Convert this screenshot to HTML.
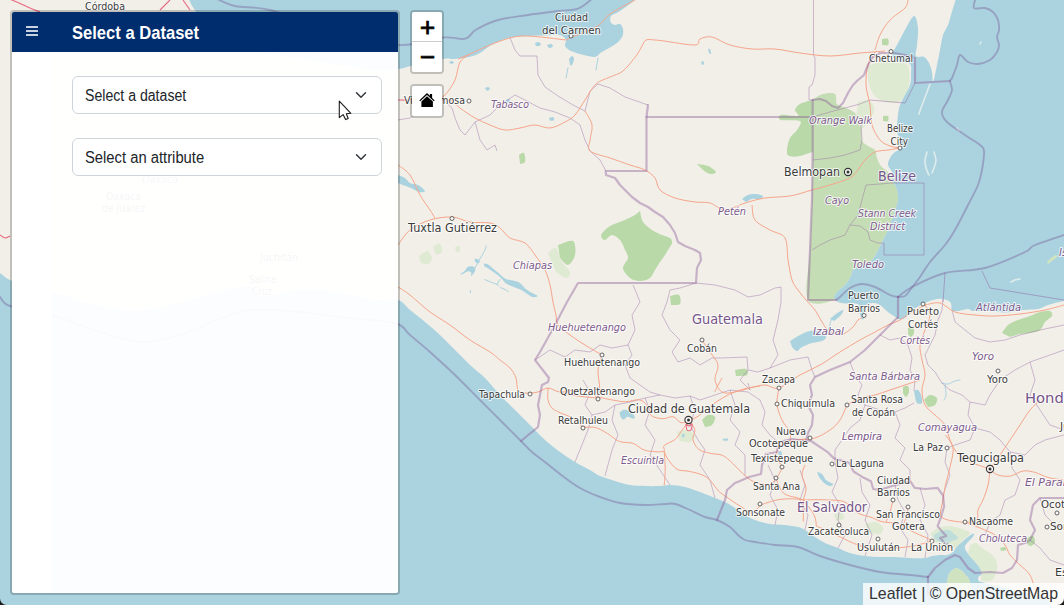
<!DOCTYPE html>
<html lang="en">
<head>
<meta charset="utf-8">
<title>Select a Dataset</title>
<style>
html,body{margin:0;padding:0;width:1064px;height:605px;overflow:hidden;background:#f2efe9;font-family:"Liberation Sans",sans-serif;}
#wrap{position:relative;width:1064px;height:605px;overflow:hidden;}
#map{position:absolute;left:0;top:0;display:block;}
.sidebar{position:absolute;left:10px;top:10px;width:386px;height:581px;border:2px solid rgba(0,0,0,.2);border-radius:4px;background-clip:padding-box;overflow:hidden;}
.tabs{position:absolute;left:0;top:0;width:40px;height:100%;background:#fff;}
.tab{width:40px;height:40px;background:#002d6d;position:relative;}
.tab i{position:absolute;left:14px;width:12px;height:1.6px;background:#c9d2e2;border-radius:.5px;}
.content{position:absolute;left:40px;top:0;right:0;bottom:0;background:rgba(255,255,255,.95);}
.hdr{height:40px;background:#002d6d;color:#fff;margin:0;padding:0 0 0 20px;line-height:40px;font-weight:bold;font-size:19px;white-space:nowrap;}
.hdr span{display:inline-block;transform-origin:0 50%;}
.sel{position:absolute;left:20px;width:308px;height:36px;border:1px solid #ced4da;border-radius:6px;background:#fff;color:#212529;font-size:16px;line-height:38px;}
.sel span{position:absolute;left:11.6px;top:0;white-space:nowrap;transform-origin:0 50%;display:inline-block;}
.sel svg{position:absolute;right:12px;top:12px;}
.bar{position:absolute;left:410px;border:2px solid rgba(0,0,0,.2);border-radius:4px;background-clip:padding-box;width:30px;}
.bar a{display:block;width:30px;background:#fff;color:#000;text-align:center;text-decoration:none;font-family:"Liberation Mono","DejaVu Sans Mono",monospace;font-weight:bold;font-size:26px;position:relative;}
.bar a b{position:absolute;left:0;width:30px;text-align:center;font-weight:normal;-webkit-text-stroke:.8px #000;}
.attr{position:absolute;right:0;bottom:0;height:22px;width:201px;background:rgba(255,255,255,.8);color:#333;font-size:15.9px;line-height:22px;white-space:nowrap;}
.attr span{position:absolute;left:6px;top:0;display:inline-block;transform-origin:0 50%;}
.corner{position:absolute;width:8px;height:8px;}
</style>
</head>
<body>
<div id="wrap">
<svg id="map" width="1064" height="605" viewBox="0 0 1064 605">
<rect width="1064" height="605" fill="#f2efe9"/>
<g fill="#b9d9a8">
<path d="M640 211 C640.5 212.8 641.0 218.8 643 222 C645.0 225.2 648.8 227.8 652 230 C655.2 232.2 659.0 233.7 662 235 C665.0 236.3 668.3 236.7 670 238 C671.7 239.3 672.3 241.0 672 243 C671.7 245.0 669.2 248.0 668 250 C666.8 252.0 666.3 253.0 665 255 C663.7 257.0 661.7 259.5 660 262 C658.3 264.5 656.7 267.3 655 270 C653.3 272.7 652.5 276.2 650 278 C647.5 279.8 643.3 281.0 640 281 C636.7 281.0 632.8 280.2 630 278 C627.2 275.8 623.3 271.3 623 268 C622.7 264.7 627.7 261.0 628 258 C628.3 255.0 626.3 253.0 625 250 C623.7 247.0 622.2 242.5 620 240 C617.8 237.5 614.5 235.0 612 235 C609.5 235.0 606.8 239.8 605 240 C603.2 240.2 601.0 237.7 601 236 C601.0 234.3 603.2 231.8 605 230 C606.8 228.2 608.7 226.7 612 225 C615.3 223.3 621.2 221.7 625 220 C628.8 218.3 633.3 215.8 635 215Z"/>
<path d="M558 245 C560.5 244.3 570.2 239.3 573 241 C575.8 242.7 575.8 251.0 575 255 C574.2 259.0 570.5 264.5 568 265 C565.5 265.5 561.3 259.2 560 258Z"/>
<path d="M697 164 C698.8 164.3 704.8 164.7 708 166 C711.2 167.3 715.7 170.7 716 172 C716.3 173.3 712.2 174.3 710 174 C707.8 173.7 704.2 170.7 703 170Z"/>
<path d="M812 100 C810.0 100.7 802.8 102.3 800 104 C797.2 105.7 795.3 108.0 795 110 C794.7 112.0 800.3 115.2 798 116 C795.7 116.8 783.8 114.3 781 115 C778.2 115.7 777.8 119.0 781 120 C784.2 121.0 797.3 119.3 800 121 C802.7 122.7 798.7 127.2 797 130 C795.3 132.8 791.7 134.7 790 138 C788.3 141.3 787.2 147.0 787 150 C786.8 153.0 786.8 155.0 789 156 C791.2 157.0 796.0 156.7 800 156 C804.0 155.3 808.0 153.0 813 152 C818.0 151.0 825.5 152.0 830 150 C834.5 148.0 837.5 144.2 840 140 C842.5 135.8 845.0 130.0 845 125 C845.0 120.0 842.5 114.2 840 110 C837.5 105.8 832.8 102.7 830 100 C827.2 97.3 824.2 95.0 823 94Z"/>
<path d="M1002 333 C1003.0 331.7 1005.3 327.2 1008 325 C1010.7 322.8 1014.3 321.5 1018 320 C1021.7 318.5 1026.3 317.3 1030 316 C1033.7 314.7 1036.7 312.8 1040 312 C1043.3 311.2 1048.0 310.3 1050 311 C1052.0 311.7 1052.8 314.2 1052 316 C1051.2 317.8 1047.0 319.7 1045 322 C1043.0 324.3 1042.5 328.2 1040 330 C1037.5 331.8 1033.3 332.3 1030 333 C1026.7 333.7 1023.3 333.3 1020 334 C1016.7 334.7 1011.7 336.5 1010 337Z"/>
<path d="M908 328 C908.8 327.8 912.0 326.2 913 327 C914.0 327.8 914.3 331.3 914 333 C913.7 334.7 912.0 336.8 911 337 C910.0 337.2 908.5 334.5 908 334Z"/>
<path d="M903 387 C903.8 386.8 907.0 385.2 908 386 C909.0 386.8 909.3 390.2 909 392 C908.7 393.8 907.0 396.8 906 397 C905.0 397.2 903.5 393.7 903 393Z"/>
<path d="M924 400 C925.0 399.2 927.8 395.3 930 395 C932.2 394.7 936.2 396.3 937 398 C937.8 399.7 936.5 403.5 935 405 C933.5 406.5 929.2 406.7 928 407Z"/>
<path d="M702 420 C703.0 419.2 705.8 415.5 708 415 C710.2 414.5 714.3 415.3 715 417 C715.7 418.7 713.7 423.3 712 425 C710.3 426.7 706.2 426.7 705 427Z"/>
<path d="M735 370 C736.8 369.8 744.0 368.2 746 369 C748.0 369.8 748.7 373.8 747 375 C745.3 376.2 737.8 375.8 736 376Z"/>
<path d="M670 296 C671.5 295.8 677.3 293.7 679 295 C680.7 296.3 681.3 302.3 680 304 C678.7 305.7 672.5 304.8 671 305Z"/>
<path d="M882 39 C883.0 39.0 887.0 38.0 888 39 C889.0 40.0 889.0 44.0 888 45 C887.0 46.0 883.0 45.0 882 45Z"/>
<path d="M883 116 C883.8 116.0 887.2 115.2 888 116 C888.8 116.8 888.8 120.2 888 121 C887.2 121.8 883.8 121.0 883 121Z"/>
<path d="M1027 538 C1028.0 537.7 1031.7 535.3 1033 536 C1034.3 536.7 1035.3 540.3 1035 542 C1034.7 543.7 1032.3 545.7 1031 546 C1029.7 546.3 1027.7 544.3 1027 544Z"/>
<path d="M1000 548 C1000.8 547.8 1004.0 546.7 1005 547 C1006.0 547.3 1006.7 549.3 1006 550 C1005.3 550.7 1001.8 550.8 1001 551Z"/>
<path d="M519 155 C519.8 154.7 523.0 151.8 524 153 C525.0 154.2 525.7 160.2 525 162 C524.3 163.8 520.8 163.7 520 164Z"/>
</g>
<g fill="#c4ddb4">
<path d="M812 100 C813.8 99.0 819.2 95.0 823 94 C826.8 93.0 832.7 92.3 835 94 C837.3 95.7 835.2 101.7 837 104 C838.8 106.3 842.8 106.3 846 108 C849.2 109.7 853.5 111.2 856 114 C858.5 116.8 860.0 120.7 861 125 C862.0 129.3 860.8 136.5 862 140 C863.2 143.5 865.8 144.3 868 146 C870.2 147.7 873.5 148.0 875 150 C876.5 152.0 876.0 155.3 877 158 C878.0 160.7 879.2 163.7 881 166 C882.8 168.3 886.0 170.0 888 172 C890.0 174.0 892.2 176.5 893 178 C893.8 179.5 892.3 179.0 893 181 C893.7 183.0 896.2 186.8 897 190 C897.8 193.2 898.3 196.7 898 200 C897.7 203.3 896.0 206.7 895 210 C894.0 213.3 893.3 216.3 892 220 C890.7 223.7 888.5 228.7 887 232 C885.5 235.3 884.5 237.0 883 240 C881.5 243.0 879.8 246.7 878 250 C876.2 253.3 874.7 257.3 872 260 C869.3 262.7 865.2 264.3 862 266 C858.8 267.7 854.8 268.3 853 270 C851.2 271.7 852.3 273.5 851 276 C849.7 278.5 847.2 282.5 845 285 C842.8 287.5 839.8 289.0 838 291 C836.2 293.0 834.3 295.5 834 297 C833.7 298.5 840.3 299.5 836 300 C831.7 300.5 812.3 308.3 808 300 C803.7 291.7 809.3 266.7 810 250 C810.7 233.3 811.5 216.5 812 200 C812.5 183.5 812.8 159.2 813 151Z"/>
</g>
<g fill="#dfead3">
<path d="M433 246 C434.2 245.7 438.5 243.0 440 244 C441.5 245.0 442.7 250.2 442 252 C441.3 253.8 437.0 254.5 436 255Z"/>
<path d="M419 256 C420.3 255.2 424.8 250.7 427 251 C429.2 251.3 431.8 255.8 432 258 C432.2 260.2 429.8 263.2 428 264 C426.2 264.8 422.2 263.2 421 263Z"/>
<path d="M455 247 C455.7 246.8 458.2 245.3 459 246 C459.8 246.7 460.5 250.0 460 251 C459.5 252.0 456.7 251.8 456 252Z"/>
<path d="M868 66 C870.0 65.3 875.5 62.7 880 62 C884.5 61.3 890.3 61.3 895 62 C899.7 62.7 905.7 62.2 908 66 C910.3 69.8 909.8 79.7 909 85 C908.2 90.3 905.3 95.0 903 98 C900.7 101.0 898.8 102.7 895 103 C891.2 103.3 883.8 101.8 880 100 C876.2 98.2 874.0 95.3 872 92 C870.0 88.7 868.7 82.0 868 80Z"/>
<path d="M858 102 C859.7 101.7 865.3 99.0 868 100 C870.7 101.0 873.7 104.7 874 108 C874.3 111.3 872.0 116.7 870 120 C868.0 123.3 864.3 128.0 862 128 C859.7 128.0 857.0 121.3 856 120Z"/>
<path d="M930 534 C931.3 533.0 934.7 529.3 938 528 C941.3 526.7 946.0 525.8 950 526 C954.0 526.2 958.7 527.8 962 529 C965.3 530.2 970.0 531.0 970 533 C970.0 535.0 964.5 538.5 962 541 C959.5 543.5 957.7 547.2 955 548 C952.3 548.8 949.0 546.8 946 546 C943.0 545.2 938.5 543.5 937 543Z"/>
<path d="M970 545 C971.0 544.7 974.0 542.5 976 543 C978.0 543.5 979.7 546.3 982 548 C984.3 549.7 987.7 551.0 990 553 C992.3 555.0 994.8 557.2 996 560 C997.2 562.8 997.7 566.7 997 570 C996.3 573.3 994.5 578.2 992 580 C989.5 581.8 983.8 581.9 982 581 C980.2 580.1 981.7 576.6 981.4 574.5 C981.1 572.4 981.0 570.6 980 568.6 C979.0 566.6 977.5 565.1 975.5 562.6 C973.5 560.1 969.2 555.2 968 553.7Z"/>
<path d="M865 524 C866.7 523.7 872.0 521.5 875 522 C878.0 522.5 882.2 525.0 883 527 C883.8 529.0 882.5 533.0 880 534 C877.5 535.0 870.0 533.2 868 533Z"/>
<path d="M834 514 C835.3 513.8 840.3 512.2 842 513 C843.7 513.8 845.0 517.7 844 519 C843.0 520.3 837.3 520.7 836 521Z"/>
<path d="M677 432 C678.8 431.7 685.0 429.3 688 430 C691.0 430.7 694.7 434.0 695 436 C695.3 438.0 692.5 441.2 690 442 C687.5 442.8 681.7 441.2 680 441Z"/>
<path d="M548 253 C549.3 252.2 553.7 246.5 556 248 C558.3 249.5 559.7 258.0 562 262 C564.3 266.0 569.3 269.3 570 272 C570.7 274.7 568.3 278.0 566 278 C563.7 278.0 557.7 273.0 556 272Z"/>
</g>
<g fill="#aad3df">
<path d="M189 -6 C189.1 -5.0 188.5 -2.7 189.5 0 C190.5 2.7 190.8 4.7 195 10 C199.2 15.3 205.8 25.3 215 32 C224.2 38.7 237.5 45.8 250 50 C262.5 54.2 276.7 54.8 290 57 C303.3 59.2 316.7 60.8 330 63 C343.3 65.2 358.7 69.0 370 70 C381.3 71.0 391.2 69.7 398 69 C404.8 68.3 403.5 67.7 411 66 C418.5 64.3 435.7 60.2 443 59 C450.3 57.8 450.0 59.5 455 59 C460.0 58.5 468.3 57.3 473 56 C477.7 54.7 479.7 53.0 483 51 C486.3 49.0 488.5 46.2 493 44 C497.5 41.8 504.2 38.8 510 37.5 C515.8 36.2 521.7 36.4 528 36 C534.3 35.6 542.7 35.5 548 35.3 C553.3 35.1 557.0 34.2 560 35 C563.0 35.8 565.2 38.2 566 40 C566.8 41.8 564.2 44.2 565 46 C565.8 47.8 567.8 49.5 571 51 C574.2 52.5 580.0 54.0 584 55 C588.0 56.0 592.2 57.4 595 57 C597.8 56.6 598.5 54.1 601 52.5 C603.5 50.9 607.2 49.2 610 47.5 C612.8 45.8 615.4 44.4 617.5 42.5 C619.6 40.6 621.6 38.2 622.5 36 C623.4 33.8 623.4 31.0 623 29 C622.6 27.0 621.3 24.7 620 24 C618.7 23.3 616.6 25.3 615 25 C613.4 24.7 611.3 23.5 610.6 22 C609.9 20.5 609.9 17.6 611 16 C612.1 14.4 615.2 13.9 617.5 12.5 C619.8 11.1 622.1 9.6 625 7.5 C627.9 5.4 632.5 2.2 635 0 C637.5 -2.2 639.2 -5.0 640 -6Z"/>
<path d="M957 -6 C956.8 -5.0 956.5 -3.5 955.5 0 C954.5 3.5 952.2 10.8 951 15 C949.8 19.2 949.3 21.7 948 25 C946.7 28.3 944.3 30.8 943 35 C941.7 39.2 940.8 45.8 940 50 C939.2 54.2 938.7 56.7 938 60 C937.3 63.3 936.8 66.3 936 70 C935.2 73.7 933.7 81.7 933 82 C932.3 82.3 932.7 75.2 932 72 C931.3 68.8 930.3 65.5 929 63 C927.7 60.5 926.2 58.2 924 57 C921.8 55.8 917.2 58.0 916 56 C914.8 54.0 916.7 49.7 917 45 C917.3 40.3 918.5 32.8 918 28 C917.5 23.2 916.2 15.7 914 16 C911.8 16.3 907.8 25.2 905 30 C902.2 34.8 899.0 41.3 897 45 C895.0 48.7 893.7 50.0 893 52 C892.3 54.0 891.8 55.3 893 57 C894.2 58.7 897.2 60.8 900 62 C902.8 63.2 908.2 61.8 910 64 C911.8 66.2 911.0 71.5 911 75 C911.0 78.5 911.0 81.7 910 85 C909.0 88.3 906.7 91.7 905 95 C903.3 98.3 901.2 101.7 900 105 C898.8 108.3 898.5 110.8 898 115 C897.5 119.2 896.7 125.8 897 130 C897.3 134.2 899.2 137.0 900 140 C900.8 143.0 902.8 146.0 902 148 C901.2 150.0 897.0 150.3 895 152 C893.0 153.7 891.2 155.8 890 158 C888.8 160.2 887.7 162.7 888 165 C888.3 167.3 891.2 169.5 892 172 C892.8 174.5 892.2 177.0 893 180 C893.8 183.0 896.2 186.7 897 190 C897.8 193.3 898.3 196.7 898 200 C897.7 203.3 896.0 206.7 895 210 C894.0 213.3 893.3 216.3 892 220 C890.7 223.7 888.5 228.7 887 232 C885.5 235.3 884.5 237.0 883 240 C881.5 243.0 879.8 246.7 878 250 C876.2 253.3 874.7 257.3 872 260 C869.3 262.7 865.2 264.3 862 266 C858.8 267.7 854.8 268.3 853 270 C851.2 271.7 852.3 273.5 851 276 C849.7 278.5 847.2 282.5 845 285 C842.8 287.5 839.8 289.0 838 291 C836.2 293.0 834.3 295.5 834 297 C833.7 298.5 835.3 299.2 836 300 C836.7 300.8 836.5 301.4 838 302 C839.5 302.6 842.7 303.3 845 303.5 C847.3 303.7 849.7 302.8 852 303 C854.3 303.2 857.7 303.2 859 305 C860.3 306.8 859.5 311.7 860 314 C860.5 316.3 861.3 318.3 862 319 C862.7 319.7 863.5 320.2 864 318 C864.5 315.8 863.5 308.5 865 306 C866.5 303.5 870.5 303.2 873 303 C875.5 302.8 877.5 303.5 880 305 C882.5 306.5 885.2 309.8 888 312 C890.8 314.2 894.8 316.8 897 318 C899.2 319.2 899.6 319.6 901 319.5 C902.4 319.4 903.5 319.1 905.5 317.5 C907.5 315.9 910.1 312.2 913 310 C915.9 307.8 919.7 305.7 923 304 C926.3 302.3 929.7 300.8 933 300 C936.3 299.2 940.1 298.6 943 299 C945.9 299.4 949.0 300.7 950.5 302.5 C952.0 304.3 950.8 308.6 952 310 C953.2 311.4 955.3 311.2 958 311 C960.7 310.8 965.5 309.0 968 309 C970.5 309.0 969.7 310.7 973 311 C976.3 311.3 982.6 310.8 988 311 C993.4 311.2 999.7 312.7 1005.5 312.5 C1011.3 312.3 1017.6 310.6 1023 310 C1028.4 309.4 1033.8 309.8 1038 309 C1042.2 308.2 1043.7 306.3 1048 305 C1052.3 303.7 1060.0 301.8 1064 301 C1068.0 300.2 1070.7 351.2 1072 300 C1073.3 248.8 1072.0 45.0 1072 -6Z"/>
<path d="M-6 271 C-5.0 271.3 -2.7 271.5 0 273 C2.7 274.5 5.0 277.7 10 280 C15.0 282.3 23.0 285.0 30 287 C37.0 289.0 42.8 289.5 52 292 C61.2 294.5 74.0 299.2 85 302 C96.0 304.8 107.0 307.8 118 309 C129.0 310.2 140.0 310.2 151 309 C162.0 307.8 173.0 304.8 184 302 C195.0 299.2 206.0 294.7 217 292 C228.0 289.3 242.5 285.3 250 286 C257.5 286.7 255.3 295.2 262 296 C268.7 296.8 280.3 292.0 290 291 C299.7 290.0 310.2 289.3 320 290 C329.8 290.7 339.8 293.3 349 295 C358.2 296.7 366.8 299.2 375 300 C383.2 300.8 392.2 298.3 398 300 C403.8 301.7 405.5 306.3 410 310 C414.5 313.7 420.0 317.8 425 322 C430.0 326.2 435.0 330.3 440 335 C445.0 339.7 450.0 345.0 455 350 C460.0 355.0 465.0 360.3 470 365 C475.0 369.7 480.0 373.0 485 378 C490.0 383.0 495.0 389.7 500 395 C505.0 400.3 510.0 405.0 515 410 C520.0 415.0 525.0 420.0 530 425 C535.0 430.0 540.0 435.5 545 440 C550.0 444.5 555.0 448.3 560 452 C565.0 455.7 570.0 459.0 575 462 C580.0 465.0 585.8 467.7 590 470 C594.2 472.3 595.8 474.2 600 476 C604.2 477.8 610.0 479.5 615 481 C620.0 482.5 625.0 484.2 630 485 C635.0 485.8 640.0 485.8 645 486 C650.0 486.2 655.8 486.2 660 486 C664.2 485.8 665.8 484.8 670 485 C674.2 485.2 680.0 485.8 685 487 C690.0 488.2 695.0 490.2 700 492 C705.0 493.8 710.5 496.2 715 498 C719.5 499.8 723.7 501.3 727 503 C730.3 504.7 732.0 506.0 735 508 C738.0 510.0 741.7 513.0 745 515 C748.3 517.0 750.8 518.5 755 520 C759.2 521.5 765.0 523.2 770 524 C775.0 524.8 780.3 524.5 785 525 C789.7 525.5 794.7 526.2 798 527 C801.3 527.8 802.2 528.3 805 530 C807.8 531.7 811.7 534.8 815 537 C818.3 539.2 821.2 541.2 825 543 C828.8 544.8 833.8 546.3 838 548 C842.2 549.7 845.5 551.7 850 553 C854.5 554.3 860.0 555.3 865 556 C870.0 556.7 875.0 556.8 880 557 C885.0 557.2 890.0 556.8 895 557 C900.0 557.2 905.0 557.8 910 558 C915.0 558.2 921.3 558.3 925 558 C928.7 557.7 929.5 556.5 932 556 C934.5 555.5 937.5 555.2 940 555 C942.5 554.8 944.8 555.5 947 555 C949.2 554.5 951.5 553.2 953 552 C954.5 550.8 954.7 549.2 956 547.7 C957.3 546.2 958.4 545.3 960.6 543.3 C962.9 541.3 967.3 537.4 969.5 535.8 C971.7 534.2 973.5 533.4 974 533.6 C974.5 533.9 974.0 535.2 972.5 537.3 C971.0 539.4 965.8 543.6 965 546.3 C964.2 549.0 966.2 551.0 968 553.7 C969.8 556.4 973.5 560.1 975.5 562.6 C977.5 565.1 979.0 566.6 980 568.6 C981.0 570.6 981.7 572.6 981.4 574.5 C981.1 576.4 978.6 573.8 978 580 C977.4 586.2 1142.0 606.7 978 612 C814.0 617.3 158.0 612.0 -6 612Z"/>
<path d="M790 341 C791.7 340.0 796.7 336.7 800 335 C803.3 333.3 806.7 331.5 810 331 C813.3 330.5 817.3 331.0 820 332 C822.7 333.0 825.7 335.5 826 337 C826.3 338.5 824.3 340.0 822 341 C819.7 342.0 815.3 342.0 812 343 C808.7 344.0 804.5 345.7 802 347 C799.5 348.3 798.7 351.0 797 351 C795.3 351.0 792.8 347.7 792 347Z"/>
<path d="M830 319 C831.0 318.2 833.8 315.5 836 314 C838.2 312.5 842.2 309.8 843 310 C843.8 310.2 842.5 313.2 841 315 C839.5 316.8 835.2 320.0 834 321Z"/>
<path d="M483.7 263.8 C484.4 263.9 486.2 263.6 487.7 264.3 C489.2 265.1 491.0 267.0 492.7 268.3 C494.4 269.6 496.0 270.9 497.6 272.3 C499.2 273.7 501.1 275.6 502.6 276.7 C504.1 277.8 505.0 278.6 506.5 279.2 C508.0 279.8 509.7 279.8 511.5 280.2 C513.3 280.6 515.9 281.0 517.5 281.7 C519.1 282.4 520.1 283.0 521.4 284.2 C522.7 285.4 523.8 287.3 525.4 288.7 C527.0 290.1 529.5 291.5 531.3 292.6 C533.1 293.7 535.3 294.4 536.3 295.1 C537.3 295.8 538.0 296.3 537.3 296.6 C536.6 296.9 533.9 297.5 532.3 297.1 C530.6 296.7 529.2 295.3 527.4 294.1 C525.6 292.9 523.4 291.2 521.4 290.1 C519.4 289.0 517.5 288.5 515.5 287.7 C513.5 286.9 511.1 285.9 509.5 285.2 C507.9 284.4 506.8 284.1 505.6 283.2 C504.5 282.3 503.8 280.9 502.6 279.7 C501.4 278.5 500.1 277.0 498.6 275.8 C497.1 274.6 495.4 273.5 493.7 272.3 C492.0 271.1 490.3 269.8 488.7 268.8 C487.1 267.8 484.9 266.7 484.2 266.3Z"/>
<path d="M459.9 274.3 C460.7 273.7 463.6 272.1 464.9 270.8 C466.2 269.6 466.6 267.6 467.9 266.8 C469.2 266.1 471.6 266.0 472.8 266.3 C474.0 266.6 475.0 267.9 475.3 268.8 C475.6 269.7 475.3 270.8 474.8 271.8 C474.3 272.8 473.0 274.1 472.3 274.8 C471.6 275.5 471.0 276.5 470.8 276.2 C470.6 275.9 471.7 273.6 471.3 272.8 C470.9 272.0 469.5 271.3 468.4 271.3 C467.3 271.3 466.0 272.2 464.9 272.8 C463.8 273.4 462.4 274.3 461.9 274.6Z"/>
<path d="M474.3 259.4 C474.8 259.3 476.4 258.6 477.3 258.9 C478.2 259.2 479.7 260.6 479.8 261.4 C479.9 262.1 478.6 263.3 477.8 263.4 C477.1 263.5 475.7 262.1 475.3 261.9Z"/>
<path d="M398 175 C399.2 175.5 403.0 176.7 405 178 C407.0 179.3 407.8 181.8 410 183 C412.2 184.2 415.5 183.7 418 185 C420.5 186.3 424.8 189.8 425 191 C425.2 192.2 421.3 192.5 419 192 C416.7 191.5 413.7 189.2 411 188 C408.3 186.8 405.2 185.8 403 185 C400.8 184.2 398.8 183.3 398 183Z"/>
<path d="M742 199 C743.0 198.3 745.7 195.8 748 195 C750.3 194.2 753.5 193.8 756 194 C758.5 194.2 762.3 195.2 763 196 C763.7 196.8 761.8 198.5 760 199 C758.2 199.5 754.3 198.5 752 199 C749.7 199.5 747.0 201.5 746 202Z"/>
<path d="M619.5 412.7 C620.2 412.2 622.0 410.1 623.5 409.8 C625.0 409.5 626.7 409.8 628.5 410.8 C630.3 411.8 633.6 414.4 634.4 415.7 C635.2 417.0 634.5 418.5 633.4 418.7 C632.2 418.9 629.1 416.5 627.5 416.7 C625.9 416.9 624.7 419.7 623.5 419.7 C622.3 419.7 621.0 417.2 620.5 416.7Z"/>
<path d="M722.7 438.7 C723.5 438.7 726.9 438.2 727.7 438.5 C728.5 438.8 728.3 440.4 727.5 440.7 C726.7 441.0 723.8 440.5 723 440.5Z"/>
<path d="M682 434 C682.4 434.1 684.2 433.9 684.5 434.5 C684.8 435.1 684.4 437.1 684 437.5 C683.6 437.9 682.3 437.1 682 437Z"/>
<path d="M535 43 C535.5 42.8 537.0 41.8 538 42 C539.0 42.2 540.8 43.3 541 44 C541.2 44.7 539.8 45.7 539 46 C538.2 46.3 536.5 46.0 536 46Z"/>
<path d="M547 45 C547.7 44.8 550.0 43.8 551 44 C552.0 44.2 553.2 45.3 553 46 C552.8 46.7 550.8 47.8 550 48 C549.2 48.2 548.3 47.2 548 47Z"/>
<path d="M569 59 C569.5 58.5 571.2 56.0 572 56 C572.8 56.0 574.0 57.5 574 59 C574.0 60.5 572.7 64.0 572 65 C571.3 66.0 570.3 65.0 570 65Z"/>
<path d="M914 391 C914.7 390.8 916.8 389.3 918 390 C919.2 390.7 920.3 392.8 921 395 C921.7 397.2 922.7 401.7 922 403 C921.3 404.3 918.2 404.0 917 403 C915.8 402.0 915.3 398.0 915 397Z"/>
<path d="M817 472 C817.8 472.3 820.5 472.7 822 474 C823.5 475.3 824.2 478.3 826 480 C827.8 481.7 832.3 483.0 833 484 C833.7 485.0 831.5 486.2 830 486 C828.5 485.8 825.8 484.5 824 483 C822.2 481.5 819.8 478.0 819 477Z"/>
<path d="M778 452 C778.5 451.8 780.3 450.5 781 451 C781.7 451.5 782.3 454.2 782 455 C781.7 455.8 779.5 455.8 779 456Z"/>
<path d="M449 62 C449.5 61.8 451.2 60.8 452 61 C452.8 61.2 454.2 62.5 454 63 C453.8 63.5 451.5 63.8 451 64Z"/>
<path d="M485 88 C485.5 87.8 487.2 86.8 488 87 C488.8 87.2 490.2 88.3 490 89 C489.8 89.7 487.5 90.7 487 91Z"/>
<path d="M506 100 C506.5 99.8 508.3 98.7 509 99 C509.7 99.3 510.3 101.3 510 102 C509.7 102.7 507.5 102.8 507 103Z"/>
<path d="M549 118 C549.7 117.8 552.2 116.7 553 117 C553.8 117.3 554.5 119.3 554 120 C553.5 120.7 550.7 120.8 550 121Z"/>
<path d="M701 62 C701.3 61.8 702.5 60.7 703 61 C703.5 61.3 704.2 63.3 704 64 C703.8 64.7 702.3 64.8 702 65Z"/>
<path d="M708 49 C708.3 49.0 709.5 48.2 710 49 C710.5 49.8 711.2 53.3 711 54 C710.8 54.7 709.3 53.2 709 53Z"/>
</g>
<g fill="#aad3df" fill-opacity=".6">
<path d="M933 535.8 C934.1 535.1 937.2 532.4 939.8 531.4 C942.4 530.4 946.2 529.4 948.7 529.9 C951.2 530.4 953.1 532.9 954.6 534.3 C956.1 535.6 958.5 536.8 958 538 C957.5 539.2 953.8 540.4 951.7 541.3 C949.7 542.2 947.7 543.2 945.7 543.3 C943.7 543.4 941.5 542.4 939.8 541.8 C938.1 541.2 936.0 540.0 935.3 539.6Z"/>
</g>
<g fill="#f2efe9">
<path d="M946 592 C946.2 590.3 946.8 584.9 947.2 582 C947.7 579.1 947.5 576.7 948.7 574.5 C949.9 572.3 952.6 569.4 954.6 568.6 C956.6 567.9 958.6 568.8 960.6 570 C962.6 571.2 965.0 574.2 966.5 576 C968.0 577.8 968.6 577.8 969.5 580.5 C970.4 583.2 971.6 590.1 972 592Z"/>
</g>
<g fill="#cfe3c0">
<path d="M946 592 C946.2 590.3 946.8 584.9 947.2 582 C947.7 579.1 947.5 576.7 948.7 574.5 C949.9 572.3 952.6 569.4 954.6 568.6 C956.6 567.9 958.6 568.8 960.6 570 C962.6 571.2 965.0 574.2 966.5 576 C968.0 577.8 968.6 577.8 969.5 580.5 C970.4 583.2 971.6 590.1 972 592Z"/>
<path d="M1047 262 C1047.7 261.3 1049.5 259.2 1051 258 C1052.5 256.8 1055.0 255.2 1056 255 C1057.0 254.8 1057.7 256.0 1057 257 C1056.3 258.0 1053.5 259.8 1052 261 C1050.5 262.2 1048.7 263.5 1048 264Z"/>
</g>
<g fill="none" stroke="#e9f0ef" stroke-width="1.6" stroke-linecap="round" stroke-opacity=".85">
<path d="M930 84 C929.5 85.3 928.0 89.3 927 92 C926.0 94.7 925.0 97.3 924 100 C923.0 102.7 921.8 105.7 921 108 C920.2 110.3 919.3 113.0 919 114"/>
<path d="M927 152 C926.7 153.3 925.2 157.3 925 160 C924.8 162.7 925.3 165.5 926 168 C926.7 170.5 928.5 173.8 929 175"/>
<path d="M934 152 C934.3 153.3 936.0 157.3 936 160 C936.0 162.7 934.7 165.8 934 168 C933.3 170.2 932.3 172.2 932 173"/>
<path d="M1011 282 C1011.7 281.7 1013.5 280.5 1015 280 C1016.5 279.5 1019.2 279.2 1020 279"/>
<path d="M957 128 L959 131"/>
<path d="M980 44 L981 42"/>
</g>
<g fill="none" stroke="#aad3df" stroke-width="1" stroke-linecap="round">
<path d="M826 336 C826.5 334.7 828.2 330.7 829 328 C829.8 325.3 830.7 321.3 831 320"/>
<path d="M942 383 C943.0 383.2 945.8 384.3 948 384 C950.2 383.7 953.0 381.7 955 381 C957.0 380.3 959.2 380.2 960 380"/>
<path d="M945 385 C945.2 386.7 946.2 392.5 946 395 C945.8 397.5 944.3 399.2 944 400"/>
<path d="M568 68 L566 78"/>
<path d="M598 58 L596 70"/>
<path d="M484.7 279.5 C485.9 280.0 489.9 281.7 492 282.5 C494.1 283.3 495.8 283.9 497 284.5 C498.2 285.1 498.7 285.8 499 286"/>
<path d="M500 279.5 L497 284"/>
<path d="M500.6 287.7 C501.2 287.9 502.7 288.4 504 289 C505.3 289.6 507.8 291.2 508.5 291.6"/>
<path d="M478 262 C478.5 261.2 479.8 259.0 481 257 C482.2 255.0 484.2 251.8 485 250 C485.8 248.2 485.8 246.7 486 246"/>
<path d="M474 270 C474.3 269.3 475.3 267.2 476 266 C476.7 264.8 477.7 263.5 478 263"/>
<path d="M470.3 290.5 L470.6 292.8"/>
</g>
<g fill="none" stroke="#9a6fa6" stroke-opacity=".45" stroke-width="1" stroke-linejoin="round">
<path d="M510 37.5 L515 50 L520 56 L537 56 L538 75 L545 87 L558 96 L573 105 L585 111 L590 91 L598 84 L610 88 L625 97 L648 105"/>
<path d="M443 100 L452 108 L455 118 L460 130 L465 135 L475 122 L490 115 L500 105 L515 95 L525 100 L540 108 L555 112 L570 118 L580 125 L585 140 L590 151 L600 160 L606 171"/>
<path d="M398 120 L410 118 L425 108 L443 100"/>
<path d="M475 122 L480 140 L487 150 L495 145 L497 151"/>
<path d="M813.5 -3 L813.5 55 L815 58 L815 75 L812 85 L809 87 L809 100 L812.7 100"/>
<path d="M696 283 L715 285 L735 290 L748 297 L760 295 L775 288 L781 287 L781 302 L778 320 L773 340 L778 355 L770 368"/>
<path d="M633 285 L636 292 L640 302 L632 315 L635 330 L628 345"/>
<path d="M667 302 L670 290 L680 288 L696 283"/>
<path d="M667 302 L662 315 L670 330 L680 340 L672 352 L678 362 L690 358 L700 365 L712 358 L722 358 L747 357 L748 370 L740 380 L750 390 L748 383"/>
<path d="M535 360 L550 350 L565 357 L575 350 L590 352 L600 345 L612 348 L628 345 L632 355 L625 365 L630 378 L640 385 L650 392 L660 395"/>
<path d="M770 368 L790 360 L808 357 L812 370 L815 377"/>
<path d="M748 370 L758 372 L770 368"/>
<path d="M660 395 L675 398 L690 396 L700 400 L715 395 L730 390 L748 392 L760 400 L765 412 L762 425 L770 435 L780 444"/>
<path d="M583 380 L590 392 L585 405 L592 415 L588 430 L575 462"/>
<path d="M592 415 L605 412 L615 405 L630 402 L645 398 L660 395"/>
<path d="M615 405 L612 420 L618 435 L612 450 L605 476"/>
<path d="M645 398 L650 410 L645 425 L655 440 L650 455 L660 470 L670 485"/>
<path d="M690 396 L695 410 L690 425 L698 440 L705 450 L700 465 L710 480 L715 498"/>
<path d="M730 390 L735 405 L730 420 L740 432 L735 445 L745 455 L745 476"/>
<path d="M812.7 117 L830 112 L845 108 L860 104 L870 100"/>
<path d="M812.7 160 L830 158 L845 155 L860 150 L862 140 L861 125"/>
<path d="M866 185 L862 200 L858 215 L850 225 L845 235 L830 240 L820 245 L812 250"/>
<path d="M866 185 L880 184 L891 183"/>
<path d="M850 225 L860 226 L868 232 L870 240 L878 243 L884 243"/>
<path d="M943 299 L942 310 L938 320 L935 335 L930 345 L925 355 L928 365 L935 372 L942 383"/>
<path d="M952 310 L955 322 L965 330 L975 338 L990 342 L1005 340 L1020 335 L1040 330 L1064 325"/>
<path d="M880 335 L890 340 L900 338 L908 345 L912 358 L910 370 L915 380 L914 391"/>
<path d="M850 362 L855 375 L862 385 L858 395 L865 405 L880 410 L895 412 L905 408 L914 403"/>
<path d="M865 405 L860 420 L850 428 L842 440 L835 450 L835 462"/>
<path d="M895 412 L900 425 L895 438 L905 448 L900 460 L910 470 L910 483"/>
<path d="M942 383 L950 390 L962 395 L970 402 L985 405 L990 395 L1000 380 L1015 370 L1030 362 L1050 355 L1064 350"/>
<path d="M970 402 L968 415 L975 428 L970 440 L955 445 L947 448"/>
<path d="M975 428 L990 432 L1000 440 L1010 452 L1025 455 L1035 445 L1045 440 L1064 435"/>
<path d="M1010 452 L1012 468 L1020 480 L1015 495 L1005 500 L1000 515 L990 522 L985 535"/>
<path d="M947 448 L945 462 L950 475 L943 495"/>
<path d="M1030 362 L1035 380 L1030 395 L1040 410 L1050 425 L1064 430"/>
<path d="M768 465 L775 480 L770 495 L778 510 L775 525"/>
<path d="M800 470 L805 485 L800 500 L808 515 L805 530"/>
<path d="M835 462 L838 478 L832 492 L840 505 L838 520 L845 535 L838 548"/>
<path d="M860 478 L862 492 L870 505 L865 520 L872 535 L865 556"/>
<path d="M895 485 L898 500 L905 512 L900 528 L908 540 L905 557"/>
<path d="M920 488 L925 505 L920 520 L928 535 L925 558"/>
<path d="M1040 498 L1045 515 L1055 525 L1064 528"/>
<path d="M1030 540 L1040 548 L1050 560 L1064 565"/>
</g>
<g fill="none" stroke="#f6a58a" stroke-width="1" stroke-linejoin="round">
<path d="M566 40 C566.8 39.6 565.8 39.8 571 37.5 C576.2 35.2 591.0 29.9 597.5 26 C604.0 22.1 603.8 18.3 610 14 C616.2 9.7 630.8 2.3 635 0"/>
<path d="M458 59 C460.0 58.2 464.7 56.3 470 54 C475.3 51.7 483.3 47.7 490 45 C496.7 42.3 503.7 39.5 510 38 C516.3 36.5 518.7 35.7 528 36 C537.3 36.3 559.7 39.3 566 40"/>
<path d="M435 100 C436.7 99.2 441.7 98.3 445 95 C448.3 91.7 452.5 85.5 455 80 C457.5 74.5 457.5 66.3 460 62 C462.5 57.7 468.3 55.3 470 54"/>
<path d="M435 100 C437.5 100.0 445.8 98.7 450 100 C454.2 101.3 455.8 105.0 460 108 C464.2 111.0 470.0 115.2 475 118 C480.0 120.8 485.0 123.0 490 125 C495.0 127.0 500.0 129.5 505 130 C510.0 130.5 515.0 128.8 520 128 C525.0 127.2 530.0 125.0 535 125 C540.0 125.0 545.0 128.5 550 128 C555.0 127.5 560.8 124.2 565 122 C569.2 119.8 571.7 118.7 575 115 C578.3 111.3 581.5 105.2 585 100 C588.5 94.8 591.8 87.8 596 84 C600.2 80.2 605.5 79.2 610 77 C614.5 74.8 618.7 74.5 623 71 C627.3 67.5 632.8 60.2 636 56 C639.2 51.8 640.3 48.7 642 46 C643.7 43.3 643.8 41.0 646 40 C648.2 39.0 652.0 39.8 655 40 C658.0 40.2 662.5 40.8 664 41"/>
<path d="M664 41 C669.2 41.7 689.0 45.3 695 45 C701.0 44.7 697.2 40.3 700 39 C702.8 37.7 707.0 36.0 712 37 C717.0 38.0 723.3 43.0 730 45 C736.7 47.0 744.5 48.3 752 49 C759.5 49.7 767.0 48.3 775 49 C783.0 49.7 790.8 51.8 800 53 C809.2 54.2 820.0 56.0 830 56 C840.0 56.0 850.8 53.8 860 53 C869.2 52.2 880.8 51.3 885 51"/>
<path d="M875 50 C875.8 47.5 877.5 40.0 880 35 C882.5 30.0 885.8 24.5 890 20 C894.2 15.5 902.0 11.3 905 8 C908.0 4.7 907.5 1.3 908 0"/>
<path d="M875 52 C873.8 54.2 869.5 59.5 868 65 C866.5 70.5 865.7 78.3 866 85 C866.3 91.7 869.0 98.3 870 105 C871.0 111.7 870.3 119.2 872 125 C873.7 130.8 877.0 136.5 880 140 C883.0 143.5 886.7 144.7 890 146 C893.3 147.3 898.3 147.7 900 148"/>
<path d="M585 111 C586.2 113.3 591.2 120.2 592 125 C592.8 129.8 590.3 135.7 590 140 C589.7 144.3 586.7 148.0 590 151 C593.3 154.0 603.3 155.7 610 158 C616.7 160.3 624.2 163.0 630 165 C635.8 167.0 640.8 167.8 645 170 C649.2 172.2 652.5 174.7 655 178 C657.5 181.3 656.7 186.7 660 190 C663.3 193.3 669.2 196.0 675 198 C680.8 200.0 689.2 201.2 695 202 C700.8 202.8 705.0 201.7 710 203 C715.0 204.3 719.2 210.0 725 210 C730.8 210.0 738.3 205.0 745 203 C751.7 201.0 757.5 199.2 765 198 C772.5 196.8 782.2 197.3 790 196 C797.8 194.7 805.3 191.8 812 190 C818.7 188.2 823.7 187.0 830 185 C836.3 183.0 845.3 180.5 850 178 C854.7 175.5 856.7 171.3 858 170"/>
<path d="M752 205 C752.5 207.5 752.0 215.8 755 220 C758.0 224.2 765.0 227.0 770 230 C775.0 233.0 782.0 233.0 785 238 C788.0 243.0 786.8 253.0 788 260 C789.2 267.0 790.3 275.0 792 280 C793.7 285.0 795.7 286.7 798 290 C800.3 293.3 803.2 296.7 806 300 C808.8 303.3 812.3 306.3 815 310 C817.7 313.7 819.8 318.7 822 322 C824.2 325.3 825.0 327.8 828 330 C831.0 332.2 836.0 335.3 840 335 C844.0 334.7 849.0 330.5 852 328 C855.0 325.5 856.3 321.7 858 320 C859.7 318.3 861.3 318.3 862 318"/>
<path d="M858 170 C859.2 168.3 862.2 163.0 865 160 C867.8 157.0 871.2 153.7 875 152 C878.8 150.3 883.8 150.7 888 150 C892.2 149.3 898.0 148.3 900 148"/>
<path d="M398 245 C400.0 242.5 404.7 234.2 410 230 C415.3 225.8 423.0 222.2 430 220 C437.0 217.8 445.3 216.7 452 217 C458.7 217.3 463.7 221.0 470 222 C476.3 223.0 485.0 222.0 490 223 C495.0 224.0 496.7 225.5 500 228 C503.3 230.5 505.8 235.5 510 238 C514.2 240.5 520.8 240.2 525 243 C529.2 245.8 531.7 250.5 535 255 C538.3 259.5 542.5 265.0 545 270 C547.5 275.0 548.7 279.7 550 285 C551.3 290.3 552.0 297.0 553 302 C554.0 307.0 555.2 311.2 556 315 C556.8 318.8 555.7 321.7 558 325 C560.3 328.3 565.5 331.7 570 335 C574.5 338.3 579.7 341.7 585 345 C590.3 348.3 599.2 353.3 602 355"/>
<path d="M398 165 C400.0 166.7 406.3 170.0 410 175 C413.7 180.0 416.7 189.2 420 195 C423.3 200.8 427.5 206.2 430 210 C432.5 213.8 434.2 216.7 435 218"/>
<path d="M398 287 C400.0 288.3 404.7 290.8 410 295 C415.3 299.2 423.3 307.0 430 312 C436.7 317.0 443.3 320.3 450 325 C456.7 329.7 463.3 335.5 470 340 C476.7 344.5 485.0 348.7 490 352 C495.0 355.3 496.7 357.3 500 360 C503.3 362.7 507.3 365.0 510 368 C512.7 371.0 514.7 374.3 516 378 C517.3 381.7 516.5 387.5 518 390 C519.5 392.5 521.7 392.7 525 393 C528.3 393.3 534.2 392.8 538 392 C541.8 391.2 544.3 388.0 548 388 C551.7 388.0 555.5 391.7 560 392 C564.5 392.3 570.0 390.0 575 390 C580.0 390.0 586.2 390.5 590 392 C593.8 393.5 596.7 397.8 598 399"/>
<path d="M702 340 C703.3 342.0 707.3 347.8 710 352 C712.7 356.2 717.2 360.3 718 365 C718.8 369.7 714.3 375.5 715 380 C715.7 384.5 718.7 390.0 722 392 C725.3 394.0 730.3 392.7 735 392 C739.7 391.3 745.0 389.2 750 388 C755.0 386.8 760.2 385.0 765 385 C769.8 385.0 773.2 389.7 779 388 C784.8 386.3 793.2 378.8 800 375 C806.8 371.2 813.3 368.8 820 365 C826.7 361.2 833.3 356.2 840 352 C846.7 347.8 854.2 343.3 860 340 C865.8 336.7 870.3 334.5 875 332 C879.7 329.5 883.8 327.0 888 325 C892.2 323.0 896.0 322.2 900 320 C904.0 317.8 907.8 314.5 912 312 C916.2 309.5 922.8 306.2 925 305"/>
<path d="M779 388 C778.7 390.7 776.5 398.7 777 404 C777.5 409.3 779.8 415.3 782 420 C784.2 424.7 788.7 428.5 790 432 C791.3 435.5 790.0 439.5 790 441"/>
<path d="M925 305 C925.8 306.7 930.0 310.8 930 315 C930.0 319.2 926.7 325.0 925 330 C923.3 335.0 920.5 340.0 920 345 C919.5 350.0 921.2 355.0 922 360 C922.8 365.0 925.0 370.0 925 375 C925.0 380.0 922.0 385.0 922 390 C922.0 395.0 922.8 400.8 925 405 C927.2 409.2 931.7 411.7 935 415 C938.3 418.3 942.5 420.8 945 425 C947.5 429.2 948.3 435.8 950 440 C951.7 444.2 952.5 446.7 955 450 C957.5 453.3 961.2 457.5 965 460 C968.8 462.5 973.8 463.5 978 465 C982.2 466.5 988.0 468.3 990 469"/>
<path d="M965 522 C967.5 523.0 975.0 525.8 980 528 C985.0 530.2 990.8 532.2 995 535 C999.2 537.8 1002.5 541.7 1005 545 C1007.5 548.3 1007.5 551.7 1010 555 C1012.5 558.3 1016.7 561.7 1020 565 C1023.3 568.3 1027.5 570.8 1030 575 C1032.5 579.2 1034.2 587.5 1035 590"/>
<path d="M990 469 C991.7 466.7 996.7 459.8 1000 455 C1003.3 450.2 1006.7 445.0 1010 440 C1013.3 435.0 1016.7 430.0 1020 425 C1023.3 420.0 1026.7 414.2 1030 410 C1033.3 405.8 1038.3 401.7 1040 400"/>
<path d="M925 305 C927.5 304.7 935.0 301.8 940 303 C945.0 304.2 949.2 310.0 955 312 C960.8 314.0 968.3 314.3 975 315 C981.7 315.7 987.5 316.2 995 316 C1002.5 315.8 1011.7 315.0 1020 314 C1028.3 313.0 1037.7 311.5 1045 310 C1052.3 308.5 1060.8 305.8 1064 305"/>
<path d="M847 405 C849.2 403.8 855.3 399.7 860 398 C864.7 396.3 870.0 396.3 875 395 C880.0 393.7 885.0 391.7 890 390 C895.0 388.3 900.0 386.7 905 385 C910.0 383.3 917.5 380.8 920 380"/>
<path d="M847 405 C845.8 407.5 842.8 415.8 840 420 C837.2 424.2 834.2 427.0 830 430 C825.8 433.0 820.0 436.3 815 438 C810.0 439.7 802.5 439.7 800 440"/>
<path d="M602 355 C601.3 357.5 598.4 364.5 598 370 C597.6 375.5 599.8 383.5 599.7 388 C599.7 392.5 598.0 395.5 597.7 397"/>
<path d="M597.7 397 C600.0 397.5 607.0 399.0 611.6 399.8 C616.2 400.6 620.9 401.8 625.5 401.8 C630.1 401.8 635.8 399.1 639.4 399.8 C643.0 400.5 645.3 403.2 647.3 405.8 C649.3 408.4 648.6 413.6 651.3 415.7 C653.9 417.8 659.6 418.5 663.2 418.7 C666.8 418.9 670.1 416.0 673.1 416.7 C676.1 417.4 678.4 422.0 681 422.7 C683.6 423.4 687.7 421.0 689 420.7"/>
<path d="M548 388 C548.0 390.0 547.3 396.7 548 400 C548.7 403.3 550.0 405.9 552 408 C554.0 410.1 556.7 411.1 560 412.7 C563.3 414.3 568.1 415.4 571.9 417.7 C575.7 420.0 578.8 425.0 582.8 426.6 C586.8 428.2 591.6 426.4 595.7 427.6 C599.8 428.8 603.6 431.3 607.6 433.6 C611.6 435.9 615.2 439.9 619.5 441.5 C623.8 443.1 629.1 442.0 633.4 443.5 C637.7 445.0 640.3 449.1 645.3 450.4 C650.3 451.7 660.1 452.2 663.2 451.4 C666.4 450.6 662.2 447.5 664.2 445.5 C666.2 443.5 672.3 441.8 675.1 439.5 C677.9 437.2 678.7 434.7 681 431.6 C683.3 428.5 687.7 422.5 689 420.7"/>
<path d="M664.2 451.4 C664.4 454.4 665.2 463.7 665.2 469.3 C665.2 474.9 664.4 482.6 664.2 485.2"/>
<path d="M664.2 451.4 C664.9 452.7 666.0 456.4 668.1 459.4 C670.2 462.4 673.6 467.3 677.1 469.3 C680.6 471.3 684.7 470.3 689 471.3 C693.3 472.3 699.3 473.6 702.9 475.2 C706.5 476.8 708.2 478.5 710.8 481.2 C713.4 483.9 716.1 488.5 718.7 491.1 C721.4 493.8 723.2 494.6 726.7 497.1 C730.2 499.6 735.8 503.5 740 506 C744.2 508.5 748.5 512.2 752 512 C755.5 511.8 759.2 506.1 760.7 504.9"/>
<path d="M689 420.7 C690.0 422.2 694.2 426.5 694.9 429.6 C695.5 432.7 692.2 436.2 692.9 439.5 C693.6 442.8 695.9 447.1 698.9 449.4 C701.9 451.7 706.8 452.4 710.8 453.4 C714.8 454.4 719.1 453.8 722.7 455.4 C726.3 457.0 729.3 460.3 732.6 463.3 C735.9 466.3 739.1 470.3 742.5 473.3 C745.9 476.3 748.8 479.4 753.1 481.3 C757.4 483.2 764.6 485.0 768.4 484.6 C772.2 484.2 774.7 480.0 776 479.1"/>
<path d="M689 420.7 C690.6 419.9 695.3 418.2 698.9 415.7 C702.5 413.2 706.8 408.8 710.8 405.8 C714.8 402.8 718.7 400.2 722.7 397.9 C726.7 395.6 730.3 393.6 734.6 391.9 C738.9 390.2 744.3 388.9 748.5 387.9 C752.7 386.9 758.1 386.3 760 386"/>
<path d="M714.8 391.9 C715.4 390.6 717.5 386.3 718.7 384 C719.9 381.7 721.5 379.0 722 378"/>
<path d="M560 392 C562.0 392.5 567.7 394.2 572 395 C576.3 395.8 581.5 396.5 585.8 397 C590.1 397.5 595.7 397.8 597.7 397.9"/>
<path d="M803.3 499.9 C807.3 499.9 820.4 499.5 827.3 499.9 C834.2 500.2 839.7 499.8 844.8 502 C849.9 504.2 853.5 510.4 857.9 513 C862.3 515.5 867.0 515.8 871 517.3 C875.0 518.8 877.5 520.6 881.9 521.7 C886.3 522.8 891.7 522.1 897.2 523.9 C902.7 525.7 908.9 529.9 914.7 532.6 C920.5 535.3 929.2 539.0 932.1 540.3"/>
<path d="M816.4 526.1 C819.0 527.2 826.2 530.1 831.7 532.6 C837.2 535.1 843.4 538.9 849.2 541.4 C855.0 543.9 861.5 546.6 866.6 547.9 C871.7 549.2 874.6 549.0 879.7 549 C884.8 549.0 891.4 548.4 897.2 547.9 C903.0 547.4 908.9 546.9 914.7 545.7 C920.5 544.5 929.2 541.7 932.1 540.9"/>
<path d="M803.3 499.9 L803.3 521.7"/>
<path d="M803.3 499.9 C805.1 502.4 812.0 510.8 814.2 515.2 C816.4 519.6 816.0 524.3 816.4 526.1"/>
<path d="M760.7 504.9 C763.4 504.1 771.8 500.9 777.1 499.9 C782.4 498.9 788.0 498.8 792.4 498.8 C796.8 498.8 801.5 499.7 803.3 499.9"/>
<path d="M776 479.1 C777.3 481.5 780.2 490.2 783.7 493.3 C787.2 496.4 793.5 496.6 796.8 497.7 C800.1 498.8 802.2 499.5 803.3 499.9"/>
<path d="M776 479.1 C777.0 477.1 781.9 470.6 781.9 467.1 C781.9 463.6 776.5 461.4 776 458 C775.5 454.6 776.7 449.8 779 447 C781.3 444.2 785.5 442.3 790 441 C794.5 439.7 803.3 439.3 806 439"/>
<path d="M803.3 499.9 C803.8 497.9 806.2 492.1 806 488 C805.8 483.9 802.2 478.8 802 475 C801.8 471.2 804.5 466.7 805 465"/>
<path d="M945.5 435 C946.8 437.1 952.2 442.5 953 447.5 C953.8 452.5 951.8 458.8 950.5 465 C949.2 471.2 946.8 479.2 945.5 485 C944.2 490.8 943.8 495.0 943 500 C942.2 505.0 939.7 511.7 940.5 515 C941.3 518.3 943.9 518.8 948 520 C952.1 521.2 962.2 522.1 965 522.5"/>
<path d="M990 469.5 C989.7 472.1 989.2 479.9 988 485 C986.8 490.1 984.7 495.8 983 500 C981.3 504.2 979.0 506.7 978 510 C977.0 513.3 978.9 517.9 976.7 520 C974.5 522.1 967.0 522.1 965 522.5"/>
<path d="M990 469.5 C991.3 470.4 994.6 473.9 998 475 C1001.4 476.1 1006.3 476.7 1010.5 476 C1014.7 475.3 1018.8 471.6 1023 471 C1027.2 470.4 1031.3 471.4 1035.5 472.5 C1039.7 473.6 1043.2 476.2 1048 477.5 C1052.8 478.8 1061.3 479.6 1064 480"/>
<path d="M892.8 501 C892.3 502.8 891.1 508.5 890 512 C888.9 515.5 886.7 520.3 886 522"/>
<path d="M908.1 506.9 C907.8 508.8 906.9 515.0 906 518 C905.1 521.0 903.5 523.8 903 525"/>
</g>
<g fill="none" stroke="#e8697f" stroke-width="1.1" stroke-linejoin="round">
<path d="M0 -4 C2.0 -3.3 7.0 -2.0 12 0 C17.0 2.0 25.3 6.0 30 8 C34.7 10.0 38.3 11.3 40 12"/>
<path d="M170 0 L160 10"/>
<path d="M183 0 L190 10"/>
<path d="M398 100 C400.0 100.0 405.5 100.2 410 100 C414.5 99.8 420.8 99.0 425 99 C429.2 99.0 433.3 99.8 435 100"/>
<path d="M428 98 C428.7 97.0 430.5 92.7 432 92 C433.5 91.3 436.7 92.7 437 94 C437.3 95.3 434.5 99.0 434 100"/>
<path d="M0 235 C0.8 235.5 3.3 237.8 5 238 C6.7 238.2 9.2 236.3 10 236"/>
<path d="M686 424 C686.5 424.3 688.0 426.0 689 426 C690.0 426.0 691.7 423.3 692 424 C692.3 424.7 691.8 429.0 691 430 C690.2 431.0 687.8 431.0 687 430 C686.2 429.0 686.2 425.0 686 424"/>
</g>
<g fill="none" stroke="#8d5a99" stroke-opacity=".42" stroke-width="2.2" stroke-linejoin="round" stroke-linecap="round">
<path d="M648 105 L646.5 117 L646.5 171 L605.7 171 L606 175 L615 178 L620 185 L625 190 L632 197 L640 203 L648 207 L655 212 L663 217 L670 225 L675 233 L678 242 L685 246 L695 250 L700 253 L701 260 L697 268 L696 283 L578 283 L567 302 L555 325 L540 352 L535 360 L549 378 L548 382 L542 385 L540 395 L538 405 L540 415 L538 427 L521 441"/>
<path d="M646.5 117 L812.7 117"/>
<path d="M812.7 100 L812.7 151 L812 200 L810 250 L808 300 L836 300"/>
<path d="M812.7 100 L820 99 L826 101 L832 106 L838 108 L843 103 L848 93 L853 85 L858 80 L864 75 L868 65 L872 58 L880 53 L895 53 L905 55 L915 58 L915 83 L950 81"/>
<path d="M897 318 L880 335 L865 350 L850 362 L830 370 L815 377 L810 385 L812 395 L808 405 L813 415 L812 425 L808 433 L806 441"/>
<path d="M806 441 L792 439 L779 442 L777 452 L766 454 L762 465 L761 474 L749 477 L740 481 L735 483 L727 490 L725 500 L717 520"/>
<path d="M806 441 L811 441 L827.3 451.8 L833.9 458.4 L849.2 462.8 L853.5 471.5 L862.3 476.9 L871 481.3 L873.2 489 L879.7 490 L892.8 485.7 L910.3 481.3 L914.7 487.9 L925.6 489 L937.6 487.9 L943 495.5 L944.1 506.4 L940.9 517.3 L937.6 526.1 L943 532.6 L946.3 536 L940 538 L945 543 L952 547"/>
<path d="M1070 498 L1040 498 L1033 505 L1030 520 L1035 530 L1030 540 L1025 543 L1018 545 L1017 560 L1012 568 L1003 573 L990 572 L975 573 L968 568 L960 557 L955 555 L945 560 L935 568 L928 577"/>
<path d="M928 577 L928 595"/>
<path d="M898 297 L898 318"/>
</g>
<g fill="none" stroke="#7d5f9c" stroke-opacity=".42" stroke-width="1.9" stroke-linejoin="round" stroke-linecap="round">
<path d="M213 -3 C216.7 -1.5 225.5 3.8 235 6 C244.5 8.2 254.2 6.0 270 10 C285.8 14.0 308.7 24.2 330 30 C351.3 35.8 379.2 43.8 398 45 C416.8 46.2 431.8 38.5 443 37.5 C454.2 36.5 460.1 40.0 465.5 38.7 C470.9 37.5 470.1 33.1 475.5 30 C480.9 26.9 489.2 22.5 498 20 C506.8 17.5 518.0 16.5 528 15 C538.0 13.5 549.7 12.1 558 11 C566.3 9.9 572.2 10.9 578 8.7 C583.8 6.5 590.5 -0.2 593 -2"/>
<path d="M976 -3 C975.7 -1.2 972.5 6.2 974 8 C975.5 9.8 981.8 7.3 985 8 C988.2 8.7 990.8 10.0 993 12 C995.2 14.0 997.0 17.0 998 20 C999.0 23.0 999.2 27.2 999 30 C998.8 32.8 997.0 34.5 997 37 C997.0 39.5 999.0 42.5 999 45 C999.0 47.5 998.5 49.5 997 52 C995.5 54.5 993.2 58.0 990 60 C986.8 62.0 981.7 63.7 978 64 C974.3 64.3 971.0 63.5 968 62 C965.0 60.5 961.8 54.5 960 55 C958.2 55.5 958.3 61.2 957 65 C955.7 68.8 953.2 75.3 952 78 C950.8 80.7 950.0 79.0 950 81 C950.0 83.0 952.3 86.8 952 90 C951.7 93.2 949.7 96.3 948 100 C946.3 103.7 942.2 108.3 942 112 C941.8 115.7 943.2 118.2 947 122 C950.8 125.8 959.5 131.2 965 135 C970.5 138.8 976.8 142.3 980 145 C983.2 147.7 983.7 146.8 984 151 C984.3 155.2 983.0 164.3 982 170 C981.0 175.7 980.3 179.2 978 185 C975.7 190.8 971.8 197.5 968 205 C964.2 212.5 958.8 223.3 955 230 C951.2 236.7 949.2 239.7 945 245 C940.8 250.3 934.2 256.7 930 262 C925.8 267.3 923.3 272.3 920 277 C916.7 281.7 912.5 286.8 910 290 C907.5 293.2 907.0 294.8 905 296 C903.0 297.2 899.2 296.8 898 297"/>
<path d="M1070 233 C1064.2 235.0 1042.5 241.8 1035 245 C1027.5 248.2 1033.3 248.2 1025 252 C1016.7 255.8 998.3 264.5 985 268 C971.7 271.5 957.2 269.8 945 273 C932.8 276.2 919.8 283.0 912 287 C904.2 291.0 900.3 295.3 898 297"/>
<path d="M898 297 C896.7 296.7 893.8 296.7 890 295 C886.2 293.3 879.7 288.8 875 287 C870.3 285.2 866.2 283.8 862 284 C857.8 284.2 853.7 285.8 850 288 C846.3 290.2 842.3 295.0 840 297 C837.7 299.0 836.7 299.5 836 300"/>
<path d="M-4 294 C-3.3 294.5 -2.3 295.0 0 297 C2.3 299.0 1.3 303.0 10 306 C18.7 309.0 37.0 310.7 52 315 C67.0 319.3 85.2 327.5 100 332 C114.8 336.5 127.7 341.5 141 342 C154.3 342.5 167.3 338.7 180 335 C192.7 331.3 205.3 324.2 217 320 C228.7 315.8 236.2 311.3 250 310 C263.8 308.7 283.5 310.7 300 312 C316.5 313.3 333.2 316.2 349 318 C364.8 319.8 384.8 320.2 395 323 C405.2 325.8 404.2 330.2 410 335 C415.8 339.8 422.5 345.3 430 352 C437.5 358.7 446.7 367.0 455 375 C463.3 383.0 471.7 391.7 480 400 C488.3 408.3 498.2 418.2 505 425 C511.8 431.8 516.5 436.5 521 441 C525.5 445.5 528.0 448.5 532 452 C536.0 455.5 540.3 458.3 545 462 C549.7 465.7 554.2 469.7 560 474 C565.8 478.3 573.3 484.2 580 488 C586.7 491.8 593.3 494.5 600 497 C606.7 499.5 612.5 501.7 620 503 C627.5 504.3 637.5 504.8 645 505 C652.5 505.2 660.0 504.2 665 504 C670.0 503.8 670.8 503.0 675 504 C679.2 505.0 685.0 507.8 690 510 C695.0 512.2 700.5 515.3 705 517 C709.5 518.7 712.8 518.3 717 520 C721.2 521.7 726.5 524.5 730 527 C733.5 529.5 735.5 532.8 738 535 C740.5 537.2 742.2 538.8 745 540 C747.8 541.2 750.0 541.2 755 542 C760.0 542.8 767.8 544.2 775 545 C782.2 545.8 790.5 545.2 798 547 C805.5 548.8 811.3 553.0 820 556 C828.7 559.0 840.0 562.3 850 565 C860.0 567.7 870.0 570.3 880 572 C890.0 573.7 902.0 574.2 910 575 C918.0 575.8 925.0 576.7 928 577"/>
</g>
<g fill="none" stroke="#8d5a99" stroke-opacity=".45" stroke-width="1" stroke-linejoin="round">
<path d="M891 183 L924 183 L924 255 L884 255 L884 243"/>
<path d="M945 273 L943 302"/>
<path d="M982 271 L990 288 L1070 301"/>
<path d="M915 83 L905 103 L870 100"/>
</g>
<g fill="#fff" fill-opacity=".85" stroke="#555" stroke-width=".9">
<circle cx="452" cy="218.5" r="2"/>
<circle cx="469" cy="101" r="2"/>
<circle cx="571" cy="36" r="2"/>
<circle cx="891" cy="51.5" r="2"/>
<circle cx="900" cy="148" r="2"/>
<circle cx="602" cy="355" r="2"/>
<circle cx="598" cy="399" r="2"/>
<circle cx="530" cy="394" r="2"/>
<circle cx="583" cy="428" r="2"/>
<circle cx="702" cy="340" r="2"/>
<circle cx="779" cy="388" r="2"/>
<circle cx="777" cy="404" r="2"/>
<circle cx="864" cy="315.5" r="2"/>
<circle cx="923" cy="304" r="2"/>
<circle cx="998" cy="371" r="2"/>
<circle cx="847" cy="405" r="2"/>
<circle cx="947" cy="448" r="2"/>
<circle cx="832" cy="464" r="2"/>
<circle cx="893" cy="500" r="2"/>
<circle cx="908" cy="507" r="2"/>
<circle cx="965" cy="522" r="2"/>
<circle cx="839" cy="525" r="2"/>
<circle cx="760" cy="504" r="2"/>
<circle cx="776" cy="478" r="2"/>
<circle cx="932" cy="541" r="2"/>
<circle cx="1057" cy="513" r="2"/>
<circle cx="1047" cy="527" r="2"/>
<circle cx="810" cy="438" r="2"/>
<circle cx="878" cy="539" r="2"/>
<circle cx="782" cy="467" r="2"/>
</g>
<circle cx="848" cy="172" r="3.6" fill="#fff" fill-opacity=".8" stroke="#333" stroke-width="1.1"/><circle cx="848" cy="172" r="1.5" fill="#333"/>
<circle cx="688.5" cy="420" r="3.6" fill="#fff" fill-opacity=".8" stroke="#333" stroke-width="1.1"/><circle cx="688.5" cy="420" r="1.5" fill="#333"/>
<circle cx="990" cy="469" r="3.6" fill="#fff" fill-opacity=".8" stroke="#333" stroke-width="1.1"/><circle cx="990" cy="469" r="1.5" fill="#333"/>
<g font-family="'DejaVu Sans', 'Liberation Sans', sans-serif" text-anchor="middle" stroke-linejoin="round" paint-order="stroke" stroke="#fff" stroke-opacity=".75" stroke-width="2">
<text x="105" y="9.9" font-size="10" textLength="40" lengthAdjust="spacingAndGlyphs" fill="#3a3a3a">Córdoba</text>
<text x="571.5" y="21.4" font-size="10" textLength="33" lengthAdjust="spacingAndGlyphs" fill="#3a3a3a">Ciudad</text>
<text x="571.5" y="33.9" font-size="10" textLength="59" lengthAdjust="spacingAndGlyphs" fill="#3a3a3a">del Carmen</text>
<text x="510" y="108.4" font-size="10" textLength="38" lengthAdjust="spacingAndGlyphs" fill="#7d5a8c" font-style="italic">Tabasco</text>
<text x="891" y="62.4" font-size="10" textLength="44" lengthAdjust="spacingAndGlyphs" fill="#3a3a3a">Chetumal</text>
<text x="840.5" y="124.4" font-size="10" textLength="63" lengthAdjust="spacingAndGlyphs" fill="#7d5a8c" font-style="italic">Orange Walk</text>
<text x="900" y="132.4" font-size="10" textLength="26" lengthAdjust="spacingAndGlyphs" fill="#3a3a3a">Belize</text>
<text x="899.25" y="144.9" font-size="10" textLength="17.5" lengthAdjust="spacingAndGlyphs" fill="#3a3a3a">City</text>
<text x="812" y="176.4" font-size="12.2" textLength="56" lengthAdjust="spacingAndGlyphs" fill="#3a3a3a">Belmopan</text>
<text x="897" y="180.9" font-size="13.6" textLength="38" lengthAdjust="spacingAndGlyphs" fill="#75548a">Belize</text>
<text x="837" y="204.4" font-size="10" textLength="24" lengthAdjust="spacingAndGlyphs" fill="#7d5a8c" font-style="italic">Cayo</text>
<text x="887" y="217.4" font-size="10" textLength="58" lengthAdjust="spacingAndGlyphs" fill="#7d5a8c" font-style="italic">Stann Creek</text>
<text x="887.5" y="230.4" font-size="10" textLength="35" lengthAdjust="spacingAndGlyphs" fill="#7d5a8c" font-style="italic">District</text>
<text x="868" y="268.4" font-size="10" textLength="32" lengthAdjust="spacingAndGlyphs" fill="#7d5a8c" font-style="italic">Toledo</text>
<text x="732" y="215.4" font-size="10" textLength="28" lengthAdjust="spacingAndGlyphs" fill="#7d5a8c" font-style="italic">Petén</text>
<text x="452.5" y="232.4" font-size="12.2" textLength="89" lengthAdjust="spacingAndGlyphs" fill="#3a3a3a">Tuxtla Gutiérrez</text>
<text x="532.5" y="269.4" font-size="10" textLength="39" lengthAdjust="spacingAndGlyphs" fill="#7d5a8c" font-style="italic">Chiapas</text>
<text x="587" y="331.4" font-size="10" textLength="78" lengthAdjust="spacingAndGlyphs" fill="#7d5a8c" font-style="italic">Huehuetenango</text>
<text x="602" y="366.4" font-size="10" textLength="76" lengthAdjust="spacingAndGlyphs" fill="#3a3a3a">Huehuetenango</text>
<text x="597.5" y="395.4" font-size="10" textLength="75" lengthAdjust="spacingAndGlyphs" fill="#3a3a3a">Quetzaltenango</text>
<text x="502" y="398.4" font-size="10" textLength="46" lengthAdjust="spacingAndGlyphs" fill="#3a3a3a">Tapachula</text>
<text x="583" y="424.4" font-size="10" textLength="50" lengthAdjust="spacingAndGlyphs" fill="#3a3a3a">Retalhuleu</text>
<text x="727.5" y="323.7" font-size="13.6" textLength="71" lengthAdjust="spacingAndGlyphs" fill="#75548a">Guatemala</text>
<text x="702" y="352.4" font-size="10" textLength="30" lengthAdjust="spacingAndGlyphs" fill="#3a3a3a">Cobán</text>
<text x="778.5" y="383.4" font-size="10" textLength="33" lengthAdjust="spacingAndGlyphs" fill="#3a3a3a">Zacapa</text>
<text x="808" y="407.4" font-size="10" textLength="54" lengthAdjust="spacingAndGlyphs" fill="#3a3a3a">Chiquimula</text>
<text x="689" y="413.4" font-size="13" textLength="122" lengthAdjust="spacingAndGlyphs" fill="#3a3a3a">Ciudad de Guatemala</text>
<text x="828.5" y="335.4" font-size="10" textLength="31" lengthAdjust="spacingAndGlyphs" fill="#7d5a8c" font-style="italic">Izabal</text>
<text x="863.5" y="299.4" font-size="10" textLength="31" lengthAdjust="spacingAndGlyphs" fill="#3a3a3a">Puerto</text>
<text x="864" y="312.4" font-size="10" textLength="32" lengthAdjust="spacingAndGlyphs" fill="#3a3a3a">Barrios</text>
<text x="923" y="315.4" font-size="10" textLength="32" lengthAdjust="spacingAndGlyphs" fill="#3a3a3a">Puerto</text>
<text x="923" y="328.4" font-size="10" textLength="30" lengthAdjust="spacingAndGlyphs" fill="#3a3a3a">Cortés</text>
<text x="915" y="344.4" font-size="10" textLength="30" lengthAdjust="spacingAndGlyphs" fill="#7d5a8c" font-style="italic">Cortés</text>
<text x="998.5" y="311.4" font-size="10" textLength="45" lengthAdjust="spacingAndGlyphs" fill="#7d5a8c" font-style="italic">Atlántida</text>
<text x="983" y="360.4" font-size="10" textLength="22" lengthAdjust="spacingAndGlyphs" fill="#7d5a8c" font-style="italic">Yoro</text>
<text x="997.5" y="383.4" font-size="10" textLength="21" lengthAdjust="spacingAndGlyphs" fill="#3a3a3a">Yoro</text>
<text x="884.5" y="380.4" font-size="10" textLength="71" lengthAdjust="spacingAndGlyphs" fill="#7d5a8c" font-style="italic">Santa Bárbara</text>
<text x="877" y="403.4" font-size="10" textLength="52" lengthAdjust="spacingAndGlyphs" fill="#3a3a3a">Santa Rosa</text>
<text x="873.5" y="416.4" font-size="10" textLength="43" lengthAdjust="spacingAndGlyphs" fill="#3a3a3a">de Copán</text>
<text x="947.5" y="431.4" font-size="10" textLength="59" lengthAdjust="spacingAndGlyphs" fill="#7d5a8c" font-style="italic">Comayagua</text>
<text x="862" y="440.4" font-size="10" textLength="40" lengthAdjust="spacingAndGlyphs" fill="#7d5a8c" font-style="italic">Lempira</text>
<text x="928" y="451.4" font-size="10" textLength="30" lengthAdjust="spacingAndGlyphs" fill="#3a3a3a">La Paz</text>
<text x="990.5" y="462.4" font-size="13" textLength="67" lengthAdjust="spacingAndGlyphs" fill="#3a3a3a">Tegucigalpa</text>
<text x="860" y="467.4" font-size="10" textLength="48" lengthAdjust="spacingAndGlyphs" fill="#3a3a3a">La Laguna</text>
<text x="893.5" y="484.4" font-size="10" textLength="33" lengthAdjust="spacingAndGlyphs" fill="#3a3a3a">Ciudad</text>
<text x="893.5" y="496.4" font-size="10" textLength="33" lengthAdjust="spacingAndGlyphs" fill="#3a3a3a">Barrios</text>
<text x="908" y="518.4" font-size="10" textLength="64" lengthAdjust="spacingAndGlyphs" fill="#3a3a3a">San Francisco</text>
<text x="908.5" y="530.4" font-size="10" textLength="33" lengthAdjust="spacingAndGlyphs" fill="#3a3a3a">Gotera</text>
<text x="832" y="511.7" font-size="13.6" textLength="70" lengthAdjust="spacingAndGlyphs" fill="#75548a">El Salvador</text>
<text x="991" y="525.4" font-size="10" textLength="44" lengthAdjust="spacingAndGlyphs" fill="#3a3a3a">Nacaome</text>
<text x="838.5" y="535.4" font-size="10" textLength="61" lengthAdjust="spacingAndGlyphs" fill="#3a3a3a">Zacatecoluca</text>
<text x="878.5" y="551.4" font-size="10" textLength="43" lengthAdjust="spacingAndGlyphs" fill="#3a3a3a">Usulután</text>
<text x="932" y="551.4" font-size="10" textLength="42" lengthAdjust="spacingAndGlyphs" fill="#3a3a3a">La Unión</text>
<text x="1060.5" y="403.4" font-size="14" textLength="71" lengthAdjust="spacingAndGlyphs" fill="#75548a">Honduras</text>
<text x="1051.5" y="486.4" font-size="10" textLength="53" lengthAdjust="spacingAndGlyphs" fill="#7d5a8c" font-style="italic">El Paraíso</text>
<text x="1003" y="542.4" font-size="10" textLength="48" lengthAdjust="spacingAndGlyphs" fill="#7d5a8c" font-style="italic">Choluteca</text>
<text x="1057.5" y="508.4" font-size="10" textLength="33" lengthAdjust="spacingAndGlyphs" fill="#3a3a3a">Ocotal</text>
<text x="1070" y="530.4" font-size="10" textLength="40" lengthAdjust="spacingAndGlyphs" fill="#3a3a3a">Somoto</text>
<text x="1082.5" y="430.4" font-size="10" textLength="45" lengthAdjust="spacingAndGlyphs" fill="#3a3a3a">Juticalpa</text>
<text x="1070" y="576.4" font-size="10" textLength="30" lengthAdjust="spacingAndGlyphs" fill="#3a3a3a">Estelí</text>
<text x="791" y="435.4" font-size="10" textLength="30" lengthAdjust="spacingAndGlyphs" fill="#3a3a3a">Nueva</text>
<text x="778.5" y="447.4" font-size="10" textLength="59" lengthAdjust="spacingAndGlyphs" fill="#3a3a3a">Ocotepeque</text>
<text x="782" y="462.4" font-size="10" textLength="62" lengthAdjust="spacingAndGlyphs" fill="#3a3a3a">Texistepeque</text>
<text x="776.5" y="490.4" font-size="10" textLength="47" lengthAdjust="spacingAndGlyphs" fill="#3a3a3a">Santa Ana</text>
<text x="760.5" y="516.4" font-size="10" textLength="49" lengthAdjust="spacingAndGlyphs" fill="#3a3a3a">Sonsonate</text>
<text x="642.5" y="464.4" font-size="10" textLength="43" lengthAdjust="spacingAndGlyphs" fill="#7d5a8c" font-style="italic">Escuintla</text>
<text x="862" y="440.4" font-size="10" textLength="40" lengthAdjust="spacingAndGlyphs" fill="#7d5a8c" font-style="italic">Lempira</text>
<text x="1100" y="256.4" font-size="10" textLength="82" lengthAdjust="spacingAndGlyphs" fill="#7d5a8c" font-style="italic">Islas de la Bahía</text>
<text x="434.5" y="104.4" font-size="10" textLength="61" lengthAdjust="spacingAndGlyphs" fill="#3a3a3a">Villahermosa</text>
<text x="160" y="183.4" font-size="10" textLength="36" lengthAdjust="spacingAndGlyphs" fill="#7d5a8c" font-style="italic">Oaxaca</text>
<text x="123.5" y="200.4" font-size="10" textLength="35" lengthAdjust="spacingAndGlyphs" fill="#3a3a3a">Oaxaca</text>
<text x="123.5" y="212.4" font-size="10" textLength="43" lengthAdjust="spacingAndGlyphs" fill="#3a3a3a">de Juárez</text>
<text x="279" y="261.4" font-size="10" textLength="38" lengthAdjust="spacingAndGlyphs" fill="#3a3a3a">Juchitán</text>
<text x="262.5" y="283.4" font-size="10" textLength="27" lengthAdjust="spacingAndGlyphs" fill="#3a3a3a">Salina</text>
<text x="262" y="295.4" font-size="10" textLength="20" lengthAdjust="spacingAndGlyphs" fill="#3a3a3a">Cruz</text>
</g>
</svg>
<div class="sidebar">
  <div class="tabs"><div class="tab"><i style="top:14px"></i><i style="top:18.1px"></i><i style="top:22.2px"></i></div></div>
  <div class="content">
    <h1 class="hdr"><span id="hd" style="transform:scaleX(.872);position:relative;top:1px">Select a Dataset</span></h1>
    <div class="sel" style="top:64px"><span id="s1" style="transform:scaleX(.882)">Select a dataset</span><svg width="16" height="12" viewBox="0 0 16 12"><path d="M3.5 3.75 L8 8.25 L12.5 3.75" fill="none" stroke="#343a40" stroke-width="1.5" stroke-linecap="round" stroke-linejoin="round"/></svg></div>
    <div class="sel" style="top:126px"><span id="s2" style="transform:scaleX(.924)">Select an attribute</span><svg width="16" height="12" viewBox="0 0 16 12"><path d="M3.5 3.75 L8 8.25 L12.5 3.75" fill="none" stroke="#343a40" stroke-width="1.5" stroke-linecap="round" stroke-linejoin="round"/></svg></div>
  </div>
</div>
<div class="bar" style="top:10px">
  <a style="height:29px;border-bottom:1px solid #ccc;border-radius:2px 2px 0 0"><b id="plus" style="top:2px;left:.5px;line-height:30px">+</b></a>
  <a style="height:30px;border-radius:0 0 2px 2px"><b id="minus" style="top:2px;left:.5px;line-height:30px">−</b></a>
</div>
<div class="bar" style="top:84px">
  <a style="height:30px;border-radius:2px"><svg width="30" height="30" viewBox="0 0 30 30" style="position:absolute;left:0;top:0"><path d="M15 7 L7.3 14.4 L8.2 15.3 L15 8.9 L21.8 15.3 L22.7 14.4 L20.1 11.9 L20.1 8 L17.9 8 L17.9 9.8 Z" fill="#000"/><path d="M15 10.3 L9.4 15.6 L9.4 21 L20.9 21 L20.9 15.6 Z" fill="#000"/></svg></a>
</div>
<svg width="16" height="22" viewBox="0 0 16 22" style="position:absolute;left:338px;top:100px"><path d="M1.3 1.2 L1.3 17.6 L5.1 14.6 L7.6 19.6 L10.2 18.5 L8.3 13.7 L12.9 13.3 Z" fill="#fff" stroke="#1a1a1a" stroke-width="1.1" stroke-linejoin="round"/></svg>
<div class="attr"><span id="at">Leaflet | © OpenStreetMap</span></div>
<svg class="corner" style="left:0;bottom:0" viewBox="0 0 8 8"><path d="M0 8 L0 1.5 A6.5 6.5 0 0 0 6.5 8 Z" fill="#1c1c1c"/></svg>
<svg class="corner" style="right:0;bottom:0" viewBox="0 0 8 8"><path d="M8 8 L8 1.5 A6.5 6.5 0 0 1 1.5 8 Z" fill="#1c1c1c"/></svg>
</div>
</body>
</html>
